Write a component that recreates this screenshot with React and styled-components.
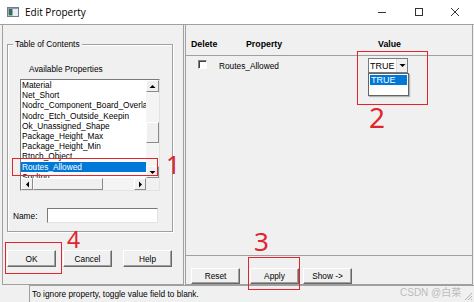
import React from "react";
import styled, { createGlobalStyle } from "styled-components";

const GlobalStyle = createGlobalStyle`
  html, body {
    margin: 0;
    padding: 0;
    background: #f0f0f0;
  }
  * {
    box-sizing: border-box;
  }
`;

const properties = [
  "Material",
  "Net_Short",
  "Nodrc_Component_Board_Overlap",
  "Nodrc_Etch_Outside_Keepin",
  "Ok_Unassigned_Shape",
  "Package_Height_Max",
  "Package_Height_Min",
  "Rtnch_Object",
  "Routes_Allowed",
  "Spcltnn",
];

const Window = styled.div`
  position: relative;
  width: 474px;
  height: 302px;
  overflow: hidden;
  display: flex;
  flex-direction: column;
  background: #f0f0f0;
  font-family: "Liberation Sans", Arial, sans-serif;
  font-size: 8.3px;
  color: #000;
`;

const TitleBar = styled.div`
  height: 25px;
  display: flex;
  align-items: center;
  padding-left: 7px;
  background: #fff;
  border-bottom: 1px solid #a0a0a0;
`;

const Title = styled.span`
  margin-left: 6px;
  font-family: "Open Sans", "Noto Sans", sans-serif;
  font-size: 10px;
  color: #000;
`;

const Controls = styled.div`
  margin-left: auto;
  margin-right: 1px;
  display: flex;
  height: 100%;
`;

const ControlButton = styled.div`
  width: 36px;
  height: 100%;
  display: flex;
  align-items: center;
  justify-content: center;
`;

const Body = styled.div`
  height: 260px;
  display: flex;
`;

const LeftPanel = styled.div`
  width: 182px;
  margin-left: 2px;
  display: flex;
  flex-direction: column;
  border-left: 1px solid #a0a0a0;
  border-right: 1px solid #a0a0a0;
  border-bottom: 1px solid #a0a0a0;
`;

const GroupBox = styled.div`
  position: relative;
  width: 166px;
  height: 188px;
  margin: 19px 0 0 4px;
  border: 1px solid #a0a0a0;
  box-shadow: inset 1px 1px 0 #fff, 1px 1px 0 #fff;
  display: flex;
  flex-direction: column;
`;

const Legend = styled.span`
  position: absolute;
  top: -7px;
  left: 5px;
  padding: 0 2px;
  line-height: 12px;
  background: #f0f0f0;
`;

const SubLabel = styled.div`
  margin: 18px 0 0 21px;
  line-height: 12px;
`;

const ListBox = styled.div`
  width: 140px;
  height: 112px;
  margin: 4px 0 0 12px;
  display: grid;
  grid-template-columns: minmax(0, 1fr) 13px;
  grid-template-rows: minmax(0, 1fr) 12px;
  background: #fff;
  border: 1px solid;
  border-color: #7a7a7a #e3e3e3 #e3e3e3 #7a7a7a;
`;

const Items = styled.div`
  overflow: hidden;
`;

const Item = styled.div`
  height: 10.2px;
  line-height: 10.2px;
  padding-left: 1px;
  white-space: nowrap;
  overflow: hidden;
  background: ${(p) => (p.$selected ? "#0078d7" : "transparent")};
  color: ${(p) => (p.$selected ? "#fff" : "#000")};
`;

const VScroll = styled.div`
  display: flex;
  flex-direction: column;
  background: #f4f4f4;
`;

const HScroll = styled.div`
  display: flex;
  background: #f4f4f4;
`;

const ScrollTrack = styled.div`
  flex: 1;
  display: flex;
  flex-direction: ${(p) => (p.$vertical ? "column" : "row")};
`;

const ScrollThumb = styled.div`
  background: #f0f0f0;
  border: 1px solid;
  border-color: #fff #8a8a8a #8a8a8a #fff;
  ${(p) => (p.$vertical ? "height: 21px; margin-top: 30px;" : "width: 70px;")}
`;

const ScrollButton = styled.div`
  width: ${(p) => (p.$vertical ? "13px" : "12px")};
  height: 12px;
  display: flex;
  align-items: center;
  justify-content: center;
  background: #f0f0f0;
  border: 1px solid;
  border-color: #fff #8a8a8a #8a8a8a #fff;
`;

const Corner = styled.div`
  background: #f0f0f0;
`;

const NameRow = styled.div`
  margin: 17px 0 0 5px;
  height: 15px;
  display: flex;
  align-items: center;
`;

const NameLabel = styled.span`
  width: 34px;
`;

const TextField = styled.div`
  width: 111px;
  height: 15px;
  background: #fff;
  border: 1px solid;
  border-color: #7a7a7a #e3e3e3 #e3e3e3 #7a7a7a;
`;

const ButtonRow = styled.div`
  display: flex;
  margin: ${(p) => p.$margin};
`;

const Button = styled.div`
  width: 49px;
  height: ${(p) => p.$height || "17px"};
  margin-left: ${(p) => p.$gap || "0"};
  display: flex;
  align-items: center;
  justify-content: center;
  background: #f0f0f0;
  border: 1px solid;
  border-color: #fff #696969 #696969 #fff;
  box-shadow: inset -1px -1px 0 #a0a0a0;
`;

const RightPanel = styled.div`
  flex: 1;
  margin: 0 1px;
  display: flex;
  flex-direction: column;
  border-left: 1px solid #a0a0a0;
  border-right: 1px solid #a0a0a0;
  border-bottom: 1px solid #a0a0a0;
`;

const ContentArea = styled.div`
  flex: 1;
  border-bottom: 1px solid #a0a0a0;
`;

const Header = styled.div`
  height: 31px;
  padding: 13px 0 0 5px;
  display: grid;
  grid-template-columns: 55px 132px auto;
  line-height: 12px;
  font-weight: bold;
  font-size: 8.8px;
  border-bottom: 1px solid #a0a0a0;
`;

const PropRow = styled.div`
  height: 15px;
  margin-top: 2px;
  padding-left: 12px;
  display: grid;
  grid-template-columns: 21px 149px auto;
  align-items: center;
`;

const CheckBox = styled.div`
  width: 9px;
  height: 9px;
  margin-top: -2px;
  background: #fff;
  border: 1px solid;
  border-color: #808080 #fff #fff #808080;
  box-shadow: inset 1px 1px 0 #404040;
`;

const Combo = styled.div`
  position: relative;
  width: 40px;
  height: 15px;
  display: flex;
  align-items: center;
  background: #fff;
  border: 1px solid #7a7a7a;
`;

const ComboText = styled.span`
  flex: 1;
  padding-left: 1px;
  font-size: 9px;
`;

const ComboArrow = styled.div`
  width: 11px;
  height: 100%;
  display: flex;
  align-items: center;
  justify-content: center;
  background: #f0f0f0;
  border-left: 1px solid #e0e0e0;
`;

const DropList = styled.div`
  position: absolute;
  top: 14px;
  left: -1px;
  width: 41px;
  height: 23px;
  padding: 1px;
  background: #fff;
  border: 1px solid #646464;
  box-shadow: 1px 1px 1px rgba(0, 0, 0, 0.25);
`;

const DropOption = styled.div`
  height: 10px;
  line-height: 10px;
  padding-left: 1px;
  font-size: 9px;
  background: #0078d7;
  color: #fff;
`;

const ButtonBar = styled.div`
  height: 28px;
  padding: 12px 0 0 5px;
  display: flex;
`;

const StatusBar = styled.div`
  height: 17px;
  display: flex;
`;

const StatusCell = styled.div`
  width: 29px;
`;

const StatusText = styled.div`
  flex: 1;
  padding-left: 2px;
  display: flex;
  align-items: center;
  border-top: 1px solid #a0a0a0;
  border-left: 1px solid #a0a0a0;
`;

const Watermark = styled.span`
  position: absolute;
  left: 400px;
  top: 284px;
  font-family: "Liberation Sans", "Noto Sans CJK SC", sans-serif;
  font-size: 10px;
  color: rgba(140, 140, 140, 0.55);
`;

const Grip = styled.svg`
  position: absolute;
  right: 1px;
  bottom: 1px;
`;

const RedBox = styled.div`
  position: absolute;
  left: ${(p) => p.$x}px;
  top: ${(p) => p.$y}px;
  width: ${(p) => p.$w}px;
  height: ${(p) => p.$h}px;
  border: 1.5px solid #e0262c;
`;

const RedNumber = styled.span`
  position: absolute;
  left: ${(p) => p.$x}px;
  top: ${(p) => p.$y}px;
  font-family: "Noto Sans", "DejaVu Sans", sans-serif;
  font-weight: 400;
  font-size: ${(p) => p.$size}px;
  line-height: 1;
  color: #e0262c;
`;

const Tri = ({ dir }) => {
  const pts = {
    up: "0.5,4 3.5,1 6.5,4",
    down: "0.5,1 3.5,4 6.5,1",
    left: "4,0.5 1,3.5 4,6.5",
    right: "1,0.5 4,3.5 1,6.5",
  }[dir];
  const vertical = dir === "up" || dir === "down";
  return (
    <svg width={vertical ? 7 : 5} height={vertical ? 5 : 7}>
      <polygon points={pts} fill="#000" />
    </svg>
  );
};

const AppIcon = () => (
  <svg width="12" height="10" viewBox="0 0 12 10">
    <rect x="0.5" y="0.5" width="11" height="9" fill="#e9eef2" stroke="#6b7f8e" />
    <rect x="1.5" y="2" width="4" height="6.5" fill="#3f6b5c" />
    <rect x="1" y="1" width="10" height="1" fill="#8aa0b0" />
  </svg>
);

export default function App() {
  return (
    <>
      <GlobalStyle />
      <Window>
        <TitleBar>
          <AppIcon />
          <Title>Edit Property</Title>
          <Controls>
            <ControlButton>
              <svg width="10" height="10">
                <line x1="0" y1="5.5" x2="8" y2="5.5" stroke="#333" />
              </svg>
            </ControlButton>
            <ControlButton>
              <svg width="10" height="10">
                <rect x="1.5" y="1.5" width="7" height="7" fill="none" stroke="#333" />
              </svg>
            </ControlButton>
            <ControlButton>
              <svg width="10" height="10">
                <line x1="1" y1="1" x2="9" y2="9" stroke="#333" />
                <line x1="9" y1="1" x2="1" y2="9" stroke="#333" />
              </svg>
            </ControlButton>
          </Controls>
        </TitleBar>

        <Body>
          <LeftPanel>
            <GroupBox>
              <Legend>Table of Contents</Legend>
              <SubLabel>Available Properties</SubLabel>
              <ListBox>
                <Items>
                  {properties.map((name) => (
                    <Item key={name} $selected={name === "Routes_Allowed"}>
                      {name}
                    </Item>
                  ))}
                </Items>
                <VScroll>
                  <ScrollButton $vertical>
                    <Tri dir="up" />
                  </ScrollButton>
                  <ScrollTrack $vertical>
                    <ScrollThumb $vertical />
                  </ScrollTrack>
                  <ScrollButton $vertical>
                    <Tri dir="down" />
                  </ScrollButton>
                </VScroll>
                <HScroll>
                  <ScrollButton>
                    <Tri dir="left" />
                  </ScrollButton>
                  <ScrollTrack>
                    <ScrollThumb />
                  </ScrollTrack>
                  <ScrollButton>
                    <Tri dir="right" />
                  </ScrollButton>
                </HScroll>
                <Corner />
              </ListBox>
              <NameRow>
                <NameLabel>Name:</NameLabel>
                <TextField />
              </NameRow>
            </GroupBox>
            <ButtonRow $margin="18px 0 0 4px">
              <Button>OK</Button>
              <Button $gap="7px">Cancel</Button>
              <Button $gap="11px">Help</Button>
            </ButtonRow>
          </LeftPanel>

          <RightPanel>
            <ContentArea>
              <Header>
                <span>Delete</span>
                <span>Property</span>
                <span>Value</span>
              </Header>
              <PropRow>
                <CheckBox />
                <span>Routes_Allowed</span>
                <Combo>
                  <ComboText>TRUE</ComboText>
                  <ComboArrow>
                    <Tri dir="down" />
                  </ComboArrow>
                  <DropList>
                    <DropOption>TRUE</DropOption>
                  </DropList>
                </Combo>
              </PropRow>
            </ContentArea>
            <ButtonBar>
              <Button $height="16px">Reset</Button>
              <Button $height="16px" $gap="10px">Apply</Button>
              <Button $height="16px" $gap="4px">Show -&gt;</Button>
            </ButtonBar>
          </RightPanel>
        </Body>

        <StatusBar>
          <StatusCell />
          <StatusText>To ignore property, toggle value field to blank.</StatusText>
        </StatusBar>

        <Watermark>CSDN @白菜</Watermark>
        <Grip width="10" height="10">
          <line x1="9" y1="2" x2="2" y2="9" stroke="#b0b0b0" />
          <line x1="9" y1="5" x2="5" y2="9" stroke="#b0b0b0" />
          <line x1="9" y1="8" x2="8" y2="9" stroke="#b0b0b0" />
        </Grip>

        <RedBox $x={12} $y={158} $w={146} $h={18} />
        <RedBox $x={357} $y={51} $w={71} $h={54} />
        <RedBox $x={248} $y={257} $w={52} $h={33} />
        <RedBox $x={5} $y={242} $w={57} $h={32} />
        <RedNumber $x={166} $y={152} $size={25}>1</RedNumber>
        <RedNumber $x={369} $y={103} $size={28}>2</RedNumber>
        <RedNumber $x={254} $y={228} $size={26}>3</RedNumber>
        <RedNumber $x={67} $y={228} $size={23}>4</RedNumber>
      </Window>
    </>
  );
}
